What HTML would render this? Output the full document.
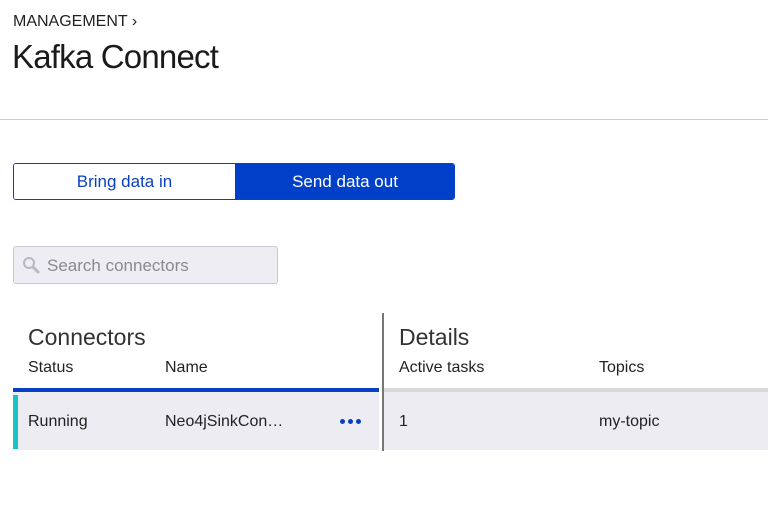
<!DOCTYPE html>
<html><head><style>
body{margin:0;width:768px;height:505px;background:#fff;font-family:"Liberation Sans",sans-serif;position:relative;overflow:hidden;color:#222}
.a{position:absolute;white-space:nowrap}
.d{position:absolute;width:5px;height:5px;border-radius:50%;background:#0a3fc4;top:419px}
</style></head><body>
<div class="a" style="left:13px;top:13px;font-size:16px;color:#222">MANAGEMENT ›</div>
<div class="a" style="left:12px;top:38px;font-size:33px;letter-spacing:-0.8px;color:#1a1a1a">Kafka Connect</div>
<div class="a" style="left:0;top:119px;width:768px;height:1px;background:#ccc"></div>
<div class="a" style="left:13px;top:163px;width:442px;height:37px;border:1px solid #0a3fc4;border-radius:3px;box-sizing:border-box;overflow:hidden">
 <div class="a" style="left:0;top:0;width:221px;height:35px;background:#fff;color:#0a3fc4;font-size:17px;line-height:36px;text-align:center">Bring data in</div>
 <div class="a" style="left:221px;top:0;width:220px;height:35px;background:#0040c8;color:#fff;font-size:17px;line-height:36px;text-align:center">Send data out</div>
</div>
<div class="a" style="left:13px;top:246px;width:265px;height:38px;border:1px solid #c8c8d0;border-radius:3px;background:#ededf3;box-sizing:border-box">
 <svg class="a" style="left:8px;top:9px" width="18" height="18" viewBox="0 0 18 18"><circle cx="7" cy="7" r="5" fill="none" stroke="#b8b8c0" stroke-width="2"/><path d="M11 11l5 5" stroke="#b8b8c0" stroke-width="3" stroke-linecap="round"/></svg>
 <div class="a" style="left:33px;top:9px;font-size:17px;color:#8a8a90">Search connectors</div>
</div>
<div class="a" style="left:28px;top:324px;font-size:23px;color:#333">Connectors</div>
<div class="a" style="left:399px;top:324px;font-size:23px;color:#333">Details</div>
<div class="a" style="left:28px;top:359px;font-size:16px">Status</div>
<div class="a" style="left:165px;top:359px;font-size:16px">Name</div>
<div class="a" style="left:399px;top:359px;font-size:16px">Active tasks</div>
<div class="a" style="left:599px;top:359px;font-size:16px">Topics</div>
<div class="a" style="left:382px;top:313px;width:2px;height:138px;background:#777"></div>
<div class="a" style="left:13px;top:388px;width:366px;height:4px;background:#0a3fc4"></div>
<div class="a" style="left:384px;top:388px;width:384px;height:4px;background:#d8d8dc"></div>
<div class="a" style="left:13px;top:392px;width:366px;height:58px;background:#ececf2"></div>
<div class="a" style="left:384px;top:392px;width:384px;height:58px;background:#ececf2"></div>
<div class="a" style="left:13px;top:395px;width:5px;height:54px;background:#17c4c4"></div>
<div class="a" style="left:28px;top:413px;font-size:16px">Running</div>
<div class="a" style="left:165px;top:413px;font-size:16px">Neo4jSinkCon…</div>
<div class="d" style="left:340px"></div><div class="d" style="left:348px"></div><div class="d" style="left:356px"></div>
<div class="a" style="left:399px;top:413px;font-size:16px">1</div>
<div class="a" style="left:599px;top:413px;font-size:16px">my-topic</div>
</body></html>
